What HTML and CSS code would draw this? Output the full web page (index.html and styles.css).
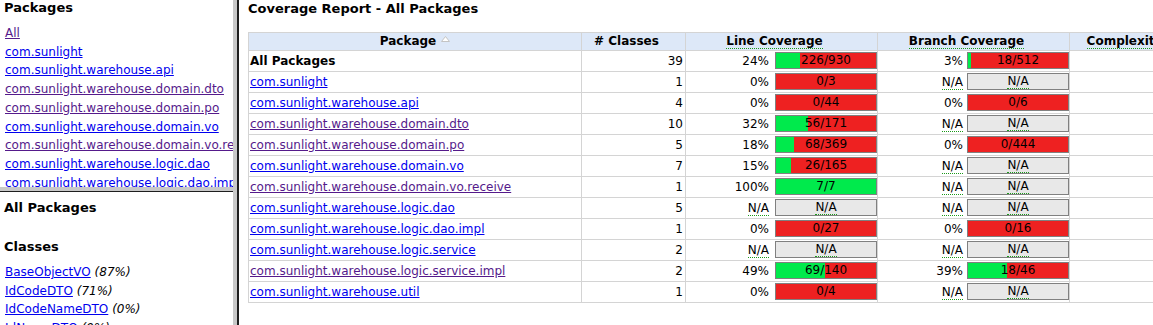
FILE: index.html
```html
<!DOCTYPE html>
<html>
<head>
    <title>Coverage Report</title>
    <link rel="stylesheet" href="styles.css">
</head>

<body>

<div class="frames">

    <div class="side">
        <div class="packageList">
            <h5>Packages</h5>
            <div class="links">
                <a href="#" class="seen">All</a>
                <a href="#">com.sunlight</a>
                <a href="#">com.sunlight.warehouse.api</a>
                <a href="#" class="seen">com.sunlight.warehouse.domain.dto</a>
                <a href="#" class="seen">com.sunlight.warehouse.domain.po</a>
                <a href="#">com.sunlight.warehouse.domain.vo</a>
                <a href="#" class="seen">com.sunlight.warehouse.domain.vo.receive</a>
                <a href="#">com.sunlight.warehouse.logic.dao</a>
                <a href="#">com.sunlight.warehouse.logic.dao.impl</a>
                <a href="#">com.sunlight.warehouse.logic.service</a>
                <a href="#">com.sunlight.warehouse.logic.service.impl</a>
                <a href="#">com.sunlight.warehouse.util</a>
            </div>
        </div>
        <div class="hsplit"></div>
        <div class="classList">
            <h5>All Packages</h5>
            <h5 class="classesTitle">Classes</h5>
            <div class="links">
                <a href="#"><u>BaseObjectVO</u> <i>(87%)</i></a>
                <a href="#"><u>IdCodeDTO</u> <i>(71%)</i></a>
                <a href="#"><u>IdCodeNameDTO</u> <i>(0%)</i></a>
                <a href="#"><u>IdNameDTO</u> <i>(0%)</i></a>
            </div>
        </div>
    </div>

    <div class="vsplit"></div>

    <div class="summary">
        <h1>Coverage Report - All Packages</h1>
        <table class="report">
            <colgroup>
                <col class="cPackage">
                <col class="cClasses">
                <col class="cCov">
                <col class="cCov">
                <col class="cCx">
            </colgroup>
            <thead>
                <tr>
                    <th>Package<span class="sort"><svg width="9" height="6" viewBox="0 0 9 6"><polygon points="4.5,0.5 8.5,5.5 0.5,5.5" fill="#fff" stroke="#c4c4c4" stroke-width="1"/></svg></span></th>
                    <th># Classes<span class="sort"></span></th>
                    <th><span class="hint">Line Coverage</span><span class="sort"></span></th>
                    <th><span class="hint">Branch Coverage</span><span class="sort"></span></th>
                    <th><span class="hint">Complexity</span><span class="sort"></span></th>
                </tr>
            </thead>
            <tbody>
                <tr>
                    <td><b>All Packages</b></td>
                    <td class="value">39</td>
                    <td><div class="cov"><span class="pct">24%</span><div class="graph"><div class="green" style="width:24px"></div><span class="label">226/930</span></div></div></td>
                    <td><div class="cov branch"><span class="pct">3%</span><div class="graph"><div class="green" style="width:3px"></div><span class="label">18/512</span></div></div></td>
                    <td class="value">1.437</td>
                </tr>
                <tr>
                    <td><a href="#">com.sunlight</a></td>
                    <td class="value">1</td>
                    <td><div class="cov"><span class="pct">0%</span><div class="graph"><span class="label">0/3</span></div></div></td>
                    <td><div class="cov branch"><span class="pct"><span class="hint">N/A</span></span><div class="graph na"><span class="label"><span class="hint">N/A</span></span></div></div></td>
                    <td class="value">1</td>
                </tr>
                <tr>
                    <td><a href="#">com.sunlight.warehouse.api</a></td>
                    <td class="value">4</td>
                    <td><div class="cov"><span class="pct">0%</span><div class="graph"><span class="label">0/44</span></div></div></td>
                    <td><div class="cov branch"><span class="pct">0%</span><div class="graph"><span class="label">0/6</span></div></div></td>
                    <td class="value">1.5</td>
                </tr>
                <tr>
                    <td><a href="#" class="seen">com.sunlight.warehouse.domain.dto</a></td>
                    <td class="value">10</td>
                    <td><div class="cov"><span class="pct">32%</span><div class="graph"><div class="green" style="width:32px"></div><span class="label">56/171</span></div></div></td>
                    <td><div class="cov branch"><span class="pct"><span class="hint">N/A</span></span><div class="graph na"><span class="label"><span class="hint">N/A</span></span></div></div></td>
                    <td class="value">1</td>
                </tr>
                <tr>
                    <td><a href="#" class="seen">com.sunlight.warehouse.domain.po</a></td>
                    <td class="value">5</td>
                    <td><div class="cov"><span class="pct">18%</span><div class="graph"><div class="green" style="width:18px"></div><span class="label">68/369</span></div></div></td>
                    <td><div class="cov branch"><span class="pct">0%</span><div class="graph"><span class="label">0/444</span></div></div></td>
                    <td class="value">1.878</td>
                </tr>
                <tr>
                    <td><a href="#">com.sunlight.warehouse.domain.vo</a></td>
                    <td class="value">7</td>
                    <td><div class="cov"><span class="pct">15%</span><div class="graph"><div class="green" style="width:15px"></div><span class="label">26/165</span></div></div></td>
                    <td><div class="cov branch"><span class="pct"><span class="hint">N/A</span></span><div class="graph na"><span class="label"><span class="hint">N/A</span></span></div></div></td>
                    <td class="value">1</td>
                </tr>
                <tr>
                    <td><a href="#" class="seen">com.sunlight.warehouse.domain.vo.receive</a></td>
                    <td class="value">1</td>
                    <td><div class="cov"><span class="pct">100%</span><div class="graph"><div class="green" style="width:100px"></div><span class="label">7/7</span></div></div></td>
                    <td><div class="cov branch"><span class="pct"><span class="hint">N/A</span></span><div class="graph na"><span class="label"><span class="hint">N/A</span></span></div></div></td>
                    <td class="value">1</td>
                </tr>
                <tr>
                    <td><a href="#">com.sunlight.warehouse.logic.dao</a></td>
                    <td class="value">5</td>
                    <td><div class="cov"><span class="pct"><span class="hint">N/A</span></span><div class="graph na"><span class="label"><span class="hint">N/A</span></span></div></div></td>
                    <td><div class="cov branch"><span class="pct"><span class="hint">N/A</span></span><div class="graph na"><span class="label"><span class="hint">N/A</span></span></div></div></td>
                    <td class="value">1</td>
                </tr>
                <tr>
                    <td><a href="#">com.sunlight.warehouse.logic.dao.impl</a></td>
                    <td class="value">1</td>
                    <td><div class="cov"><span class="pct">0%</span><div class="graph"><span class="label">0/27</span></div></div></td>
                    <td><div class="cov branch"><span class="pct">0%</span><div class="graph"><span class="label">0/16</span></div></div></td>
                    <td class="value">3.5</td>
                </tr>
                <tr>
                    <td><a href="#">com.sunlight.warehouse.logic.service</a></td>
                    <td class="value">2</td>
                    <td><div class="cov"><span class="pct"><span class="hint">N/A</span></span><div class="graph na"><span class="label"><span class="hint">N/A</span></span></div></div></td>
                    <td><div class="cov branch"><span class="pct"><span class="hint">N/A</span></span><div class="graph na"><span class="label"><span class="hint">N/A</span></span></div></div></td>
                    <td class="value">1</td>
                </tr>
                <tr>
                    <td><a href="#" class="seen">com.sunlight.warehouse.logic.service.impl</a></td>
                    <td class="value">2</td>
                    <td><div class="cov"><span class="pct">49%</span><div class="graph"><div class="green" style="width:49px"></div><span class="label">69/140</span></div></div></td>
                    <td><div class="cov branch"><span class="pct">39%</span><div class="graph"><div class="green" style="width:39px"></div><span class="label">18/46</span></div></div></td>
                    <td class="value">2.6</td>
                </tr>
                <tr>
                    <td><a href="#">com.sunlight.warehouse.util</a></td>
                    <td class="value">1</td>
                    <td><div class="cov"><span class="pct">0%</span><div class="graph"><span class="label">0/4</span></div></div></td>
                    <td><div class="cov branch"><span class="pct"><span class="hint">N/A</span></span><div class="graph na"><span class="label"><span class="hint">N/A</span></span></div></div></td>
                    <td class="value">1</td>
                </tr>
            </tbody>
        </table>
    </div>

</div>

</body>
</html>
```

FILE: styles.css
```css
        html,
        body {
            margin: 0;
            height: 100%;
            overflow: hidden;
            font-family: "DejaVu Sans", Verdana, sans-serif;
            font-size: 12px;
            color: #000;
            background: #fff;
        }

        a {
            color: #0000ee;
        }
        a.seen {
            color: #551a8b;
        }

        .frames {
            display: flex;
            height: 100%;
        }

        /* left side: package list on top, class list below */
        .side {
            width: 233px;
            display: flex;
            flex-direction: column;
            flex-shrink: 0;
        }
        .packageList {
            height: 187px;
            overflow: hidden;
            white-space: nowrap;
        }
        .classList {
            flex: 1;
            overflow: hidden;
            white-space: nowrap;
            padding-top: 8px;
        }
        .hsplit {
            height: 4px;
            background: #c8c8c8;
            border-bottom: 1px solid #1e1e1e;
        }
        .vsplit {
            width: 4px;
            flex-shrink: 0;
            background: #c8c8c8;
            border-right: 2px solid #1e1e1e;
        }

        h5 {
            font-size: 13px;
            line-height: 15px;
            margin: 0;
            padding-left: 4px;
        }
        h5.classesTitle {
            margin-top: 24px;
        }

        .links {
            margin-top: 9px;
        }
        .links a {
            display: block;
            padding-left: 5px;
            line-height: 18.7px;
            text-decoration: none;
        }
        .packageList .links a {
            text-decoration: underline;
        }
        .links i {
            color: #000;
        }

        /* summary frame */
        .summary {
            flex: 1;
            overflow: hidden;
            padding: 1px 0 0 9px;
        }
        h1 {
            font-size: 13px;
            line-height: 16px;
            margin: 0 0 15px;
            white-space: nowrap;
        }

        table.report {
            border-collapse: collapse;
            table-layout: fixed;
            width: 946px;
        }
        col.cPackage { width: 333px; }
        col.cClasses { width: 104px; }
        col.cCov { width: 192px; }
        col.cCx { width: 124px; }

        table.report th,
        table.report td {
            border: 1px solid #d4d4d4;
            line-height: 14px;
            white-space: nowrap;
            overflow: hidden;
        }
        table.report th {
            background: #dde8f8;
            font-size: 12px;
            padding: 1px 3px 2px;
            text-align: center;
        }
        table.report td {
            padding: 1px 0 2px 1px;
        }
        table.report td.value {
            text-align: right;
            padding-right: 2px;
        }

        .sort {
            display: inline-block;
            width: 14px;
        }
        .sort svg {
            margin-left: 4px;
            vertical-align: 3px;
        }

        .hint {
            border-bottom: 1px dotted #1a9a1a;
        }

        .cov {
            display: flex;
            justify-content: flex-end;
            align-items: center;
        }
        .pct {
            margin-right: 6px;
        }
        .branch .pct {
            margin-right: 4px;
        }

        .graph {
            position: relative;
            width: 100px;
            height: 15px;
            border: 1px solid #808080;
            background: #ee2121;
        }
        .graph.na {
            background: #e8e8e8;
        }
        .green {
            height: 15px;
            background: #00ea4c;
        }
        .label {
            position: absolute;
            left: 0;
            right: 0;
            top: 0;
            line-height: 15px;
            text-align: center;
        }
```
